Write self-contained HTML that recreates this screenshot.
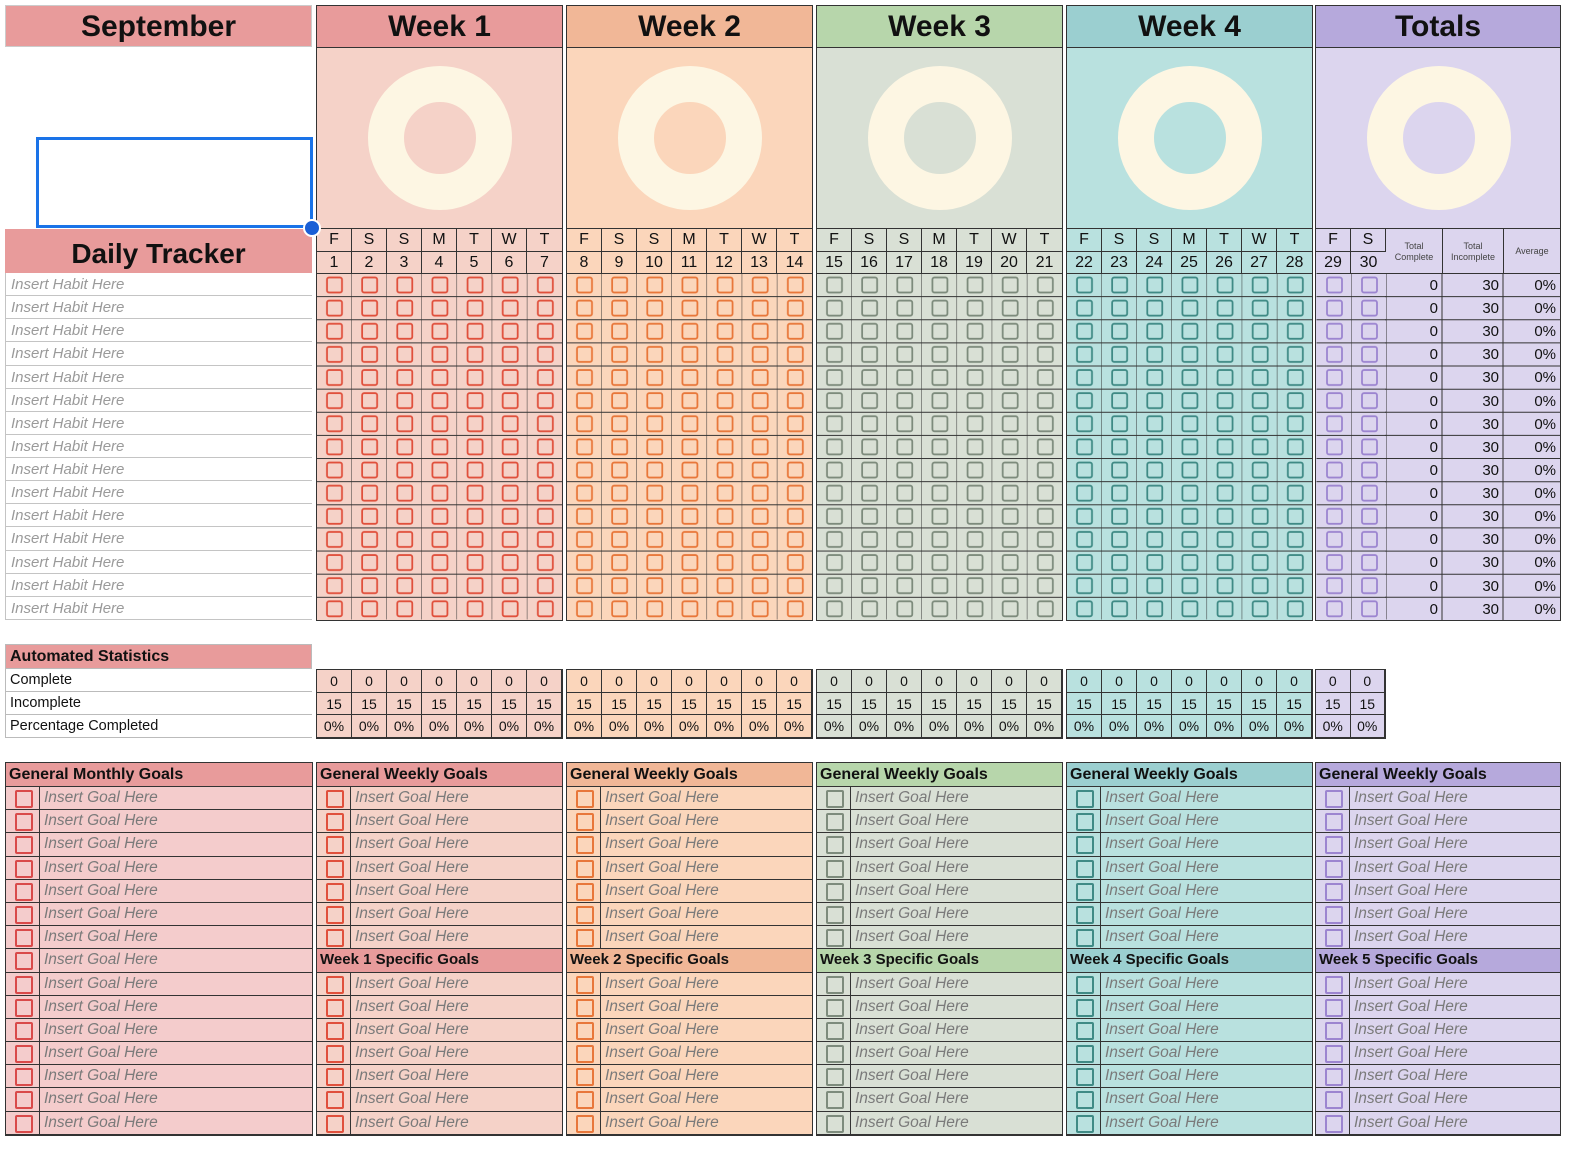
<!DOCTYPE html>
<html><head><meta charset="utf-8"><style>
*{box-sizing:border-box;margin:0;padding:0}
body{width:1588px;height:1151px;background:#fff;font-family:"Liberation Sans",sans-serif;position:relative;overflow:hidden;color:#111}
.a{position:absolute}
.hd{font-weight:bold;font-size:30px;text-align:center;line-height:42px;height:42px}
.wk{position:absolute;top:5px;width:247px;height:616px;border:1.5px solid #333}
.wk .hd{border-bottom:1.5px solid #333}
.dn{position:absolute;left:51px;top:60px;width:144px;height:144px;border-radius:50%;border:36px solid #fdf6e3}
.days{position:absolute;left:0;top:222px;width:100%;display:grid;grid-template-columns:repeat(7,1fr);font-size:16px;text-align:center}
.days span{height:22.5px;line-height:22px;border-top:1px solid #333;border-right:1px solid #333}
.days span:nth-child(7n){border-right:none}
.hab{position:absolute;left:5px;top:273px;width:307px}
.hab div{height:23.13px;line-height:23px;border-bottom:1px solid #c4c4c4;border-left:1px solid #c4c4c4;color:#9a9a9a;font-style:italic;font-size:15px;padding-left:5px}
.st{position:absolute;top:669px;height:70px;border:1.5px solid #333;display:grid;font-size:14px;text-align:center}
.st span{height:22.5px;line-height:22px;border-right:1px solid #333;border-bottom:1px solid #333}
.gc{position:absolute;top:762px;border:1.5px solid #333;width:247px}
.gc .gh{height:24px;line-height:24px;font-weight:bold;font-size:16px;padding-left:3px;border-bottom:1px solid #333}
.gc .r{height:23.2px;line-height:22px;border-bottom:1px solid #333;font-style:italic;color:#7a7a7a;font-size:15.5px;padding-left:38px;position:relative}
.gc .r:before{content:"";position:absolute;left:9px;top:3px;width:14px;height:14px;border:2px solid var(--c);border-radius:2px}
.gc .r:after{content:"";position:absolute;left:33px;top:0;bottom:0;border-left:1px solid #333}
.gc .s{height:23.2px;line-height:22px;border-bottom:1px solid #333;font-weight:bold;font-size:15px;padding-left:3px}
</style></head><body>

<div class="a hd" style="left:5px;top:5px;width:307px;background:#e89b9b;border:1px solid #ccc">September</div>
<div class="a" style="left:36px;top:137px;width:277px;height:91px;border:3px solid #1a73e8"></div>
<div class="a" style="left:303px;top:219px;width:18px;height:18px;border-radius:50%;background:#1a5fd6;border:2px solid #fff;z-index:5"></div>
<div class="a" style="left:5px;top:229px;width:307px;height:44px;background:#e89b9b;font-weight:bold;font-size:28px;text-align:center;line-height:50px">Daily Tracker</div>
<div class="hab">
<div>Insert Habit Here</div><div>Insert Habit Here</div><div>Insert Habit Here</div><div>Insert Habit Here</div><div>Insert Habit Here</div><div>Insert Habit Here</div><div>Insert Habit Here</div><div>Insert Habit Here</div><div>Insert Habit Here</div><div>Insert Habit Here</div><div>Insert Habit Here</div><div>Insert Habit Here</div><div>Insert Habit Here</div><div>Insert Habit Here</div><div>Insert Habit Here</div>
</div>

<div class="wk" style="left:316px;background:#f5d2c8"><div class="hd" style="background:#e89b9b">Week 1</div><div class="dn"></div>
<div class="days"><span>F</span><span>S</span><span>S</span><span>M</span><span>T</span><span>W</span><span>T</span><span>1</span><span>2</span><span>3</span><span>4</span><span>5</span><span>6</span><span>7</span></div></div>
<div class="wk" style="left:566px;background:#fbd6bb"><div class="hd" style="background:#f1b797">Week 2</div><div class="dn"></div>
<div class="days"><span>F</span><span>S</span><span>S</span><span>M</span><span>T</span><span>W</span><span>T</span><span>8</span><span>9</span><span>10</span><span>11</span><span>12</span><span>13</span><span>14</span></div></div>
<div class="wk" style="left:816px;background:#d9e0d5"><div class="hd" style="background:#b7d6ab">Week 3</div><div class="dn"></div>
<div class="days"><span>F</span><span>S</span><span>S</span><span>M</span><span>T</span><span>W</span><span>T</span><span>15</span><span>16</span><span>17</span><span>18</span><span>19</span><span>20</span><span>21</span></div></div>
<div class="wk" style="left:1066px;background:#b9e1df"><div class="hd" style="background:#9bcfd0">Week 4</div><div class="dn"></div>
<div class="days"><span>F</span><span>S</span><span>S</span><span>M</span><span>T</span><span>W</span><span>T</span><span>22</span><span>23</span><span>24</span><span>25</span><span>26</span><span>27</span><span>28</span></div></div>
<div class="wk" style="left:1315px;width:246px;background:#dcd5ee"><div class="hd" style="background:#b6a9dc">Totals</div><div class="dn"></div>
<div class="days" style="grid-template-columns:35px 35px 57px 61px 1fr"><span>F</span><span>S</span><span style="grid-row:span 2;font-size:9px;line-height:11px;padding-top:12px;height:45px;color:#444">Total<br>Complete</span><span style="grid-row:span 2;font-size:9px;line-height:11px;padding-top:12px;height:45px;color:#444">Total<br>Incomplete</span><span style="grid-row:span 2;font-size:9px;line-height:45px;height:45px;border-right:none;color:#444">Average</span><span>29</span><span>30</span></div></div>

<svg class="a" style="left:0;top:0" width="1588" height="1151">
<defs>
<pattern id="p1" x="316.5" y="273" width="35.14" height="23.13" patternUnits="userSpaceOnUse"><line x1="35.14" y1="0" x2="35.14" y2="23.13" stroke="#333"/><line x1="0" y1="0.5" x2="35.14" y2="0.5" stroke="#333"/><rect x="10.5" y="4.5" width="15" height="15" rx="2" fill="none" stroke="#e0503c" stroke-width="1.8"/></pattern>
<pattern id="p2" x="566.5" y="273" width="35.14" height="23.13" patternUnits="userSpaceOnUse"><line x1="35.14" y1="0" x2="35.14" y2="23.13" stroke="#333"/><line x1="0" y1="0.5" x2="35.14" y2="0.5" stroke="#333"/><rect x="10.5" y="4.5" width="15" height="15" rx="2" fill="none" stroke="#e8773a" stroke-width="1.8"/></pattern>
<pattern id="p3" x="816.5" y="273" width="35.14" height="23.13" patternUnits="userSpaceOnUse"><line x1="35.14" y1="0" x2="35.14" y2="23.13" stroke="#333"/><line x1="0" y1="0.5" x2="35.14" y2="0.5" stroke="#333"/><rect x="10.5" y="4.5" width="15" height="15" rx="2" fill="none" stroke="#7d8b7c" stroke-width="1.8"/></pattern>
<pattern id="p4" x="1066.5" y="273" width="35.14" height="23.13" patternUnits="userSpaceOnUse"><line x1="35.14" y1="0" x2="35.14" y2="23.13" stroke="#333"/><line x1="0" y1="0.5" x2="35.14" y2="0.5" stroke="#333"/><rect x="10.5" y="4.5" width="15" height="15" rx="2" fill="none" stroke="#3f8a85" stroke-width="1.8"/></pattern>
<pattern id="p5" x="1316.5" y="273" width="35" height="23.13" patternUnits="userSpaceOnUse"><line x1="35" y1="0" x2="35" y2="23.13" stroke="#333"/><line x1="0" y1="0.5" x2="35" y2="0.5" stroke="#333"/><rect x="10.5" y="4.5" width="15" height="15" rx="2" fill="none" stroke="#9c85d0" stroke-width="1.8"/></pattern>
</defs>
<rect x="316.5" y="273" width="245.5" height="346.5" fill="url(#p1)"/>
<rect x="566.5" y="273" width="245.5" height="346.5" fill="url(#p2)"/>
<rect x="816.5" y="273" width="245.5" height="346.5" fill="url(#p3)"/>
<rect x="1066.5" y="273" width="245.5" height="346.5" fill="url(#p4)"/>
<rect x="1316.5" y="273" width="70" height="346.5" fill="url(#p5)"/>
<g stroke="#333"><line x1="1385" y1="273.5" x2="1560" y2="273.5"/>
<line x1="1442" y1="273" x2="1442" y2="620"/><line x1="1503" y1="273" x2="1503" y2="620"/>
<line x1="1385" y1="296.6" x2="1560" y2="296.6"/><line x1="1385" y1="319.8" x2="1560" y2="319.8"/><line x1="1385" y1="342.9" x2="1560" y2="342.9"/><line x1="1385" y1="366" x2="1560" y2="366"/><line x1="1385" y1="389.2" x2="1560" y2="389.2"/><line x1="1385" y1="412.3" x2="1560" y2="412.3"/><line x1="1385" y1="435.4" x2="1560" y2="435.4"/><line x1="1385" y1="458.5" x2="1560" y2="458.5"/><line x1="1385" y1="481.7" x2="1560" y2="481.7"/><line x1="1385" y1="504.8" x2="1560" y2="504.8"/><line x1="1385" y1="527.9" x2="1560" y2="527.9"/><line x1="1385" y1="551.1" x2="1560" y2="551.1"/><line x1="1385" y1="574.2" x2="1560" y2="574.2"/><line x1="1385" y1="597.3" x2="1560" y2="597.3"/></g>
<g font-family="Liberation Sans" font-size="15" text-anchor="end" fill="#111">
<text x="1438" y="290">0</text><text x="1499" y="290">30</text><text x="1556" y="290">0%</text>
<text x="1438" y="313">0</text><text x="1499" y="313">30</text><text x="1556" y="313">0%</text>
<text x="1438" y="336">0</text><text x="1499" y="336">30</text><text x="1556" y="336">0%</text>
<text x="1438" y="359">0</text><text x="1499" y="359">30</text><text x="1556" y="359">0%</text>
<text x="1438" y="382">0</text><text x="1499" y="382">30</text><text x="1556" y="382">0%</text>
<text x="1438" y="406">0</text><text x="1499" y="406">30</text><text x="1556" y="406">0%</text>
<text x="1438" y="429">0</text><text x="1499" y="429">30</text><text x="1556" y="429">0%</text>
<text x="1438" y="452">0</text><text x="1499" y="452">30</text><text x="1556" y="452">0%</text>
<text x="1438" y="475">0</text><text x="1499" y="475">30</text><text x="1556" y="475">0%</text>
<text x="1438" y="498">0</text><text x="1499" y="498">30</text><text x="1556" y="498">0%</text>
<text x="1438" y="521">0</text><text x="1499" y="521">30</text><text x="1556" y="521">0%</text>
<text x="1438" y="544">0</text><text x="1499" y="544">30</text><text x="1556" y="544">0%</text>
<text x="1438" y="567">0</text><text x="1499" y="567">30</text><text x="1556" y="567">0%</text>
<text x="1438" y="591">0</text><text x="1499" y="591">30</text><text x="1556" y="591">0%</text>
<text x="1438" y="614">0</text><text x="1499" y="614">30</text><text x="1556" y="614">0%</text>
</g>
</svg>

<div class="a" style="left:5px;top:644px;width:307px;height:25px;background:#e89b9b;border:1px solid #bbb;font-weight:bold;font-size:16px;line-height:24px;padding-left:4px">Automated Statistics</div>
<div class="a" style="left:5px;top:669px;width:307px;font-size:14.5px;border-left:1px solid #bbb">
<div style="height:23px;line-height:22px;border-bottom:1px solid #bbb;padding-left:4px">Complete</div>
<div style="height:23px;line-height:22px;border-bottom:1px solid #bbb;padding-left:4px">Incomplete</div>
<div style="height:23px;line-height:22px;border-bottom:1px solid #bbb;padding-left:4px">Percentage Completed</div></div>

<div class="st" style="left:316px;width:247px;background:#f5d2c8;grid-template-columns:repeat(7,1fr)"><span>0</span><span>0</span><span>0</span><span>0</span><span>0</span><span>0</span><span>0</span><span>15</span><span>15</span><span>15</span><span>15</span><span>15</span><span>15</span><span>15</span><span>0%</span><span>0%</span><span>0%</span><span>0%</span><span>0%</span><span>0%</span><span>0%</span></div>
<div class="st" style="left:566px;width:247px;background:#fbd6bb;grid-template-columns:repeat(7,1fr)"><span>0</span><span>0</span><span>0</span><span>0</span><span>0</span><span>0</span><span>0</span><span>15</span><span>15</span><span>15</span><span>15</span><span>15</span><span>15</span><span>15</span><span>0%</span><span>0%</span><span>0%</span><span>0%</span><span>0%</span><span>0%</span><span>0%</span></div>
<div class="st" style="left:816px;width:247px;background:#d9e0d5;grid-template-columns:repeat(7,1fr)"><span>0</span><span>0</span><span>0</span><span>0</span><span>0</span><span>0</span><span>0</span><span>15</span><span>15</span><span>15</span><span>15</span><span>15</span><span>15</span><span>15</span><span>0%</span><span>0%</span><span>0%</span><span>0%</span><span>0%</span><span>0%</span><span>0%</span></div>
<div class="st" style="left:1066px;width:247px;background:#b9e1df;grid-template-columns:repeat(7,1fr)"><span>0</span><span>0</span><span>0</span><span>0</span><span>0</span><span>0</span><span>0</span><span>15</span><span>15</span><span>15</span><span>15</span><span>15</span><span>15</span><span>15</span><span>0%</span><span>0%</span><span>0%</span><span>0%</span><span>0%</span><span>0%</span><span>0%</span></div>
<div class="st" style="left:1315px;width:71px;background:#dcd5ee;grid-template-columns:repeat(2,1fr)"><span>0</span><span>0</span><span>15</span><span>15</span><span>0%</span><span>0%</span></div>

<div class="gc" style="left:5px;width:308px;background:#f4cccc;--c:#d94a4a"><div class="gh" style="background:#e89b9b">General Monthly Goals</div>
<div class="r">Insert Goal Here</div><div class="r">Insert Goal Here</div><div class="r">Insert Goal Here</div><div class="r">Insert Goal Here</div><div class="r">Insert Goal Here</div><div class="r">Insert Goal Here</div><div class="r">Insert Goal Here</div><div class="r">Insert Goal Here</div><div class="r">Insert Goal Here</div><div class="r">Insert Goal Here</div><div class="r">Insert Goal Here</div><div class="r">Insert Goal Here</div><div class="r">Insert Goal Here</div><div class="r">Insert Goal Here</div><div class="r">Insert Goal Here</div></div>

<div class="gc" style="left:316px;background:#f5d2c8;--c:#e0503c"><div class="gh" style="background:#e89b9b">General Weekly Goals</div>
<div class="r">Insert Goal Here</div><div class="r">Insert Goal Here</div><div class="r">Insert Goal Here</div><div class="r">Insert Goal Here</div><div class="r">Insert Goal Here</div><div class="r">Insert Goal Here</div><div class="r">Insert Goal Here</div><div class="s" style="background:#e89b9b">Week 1 Specific Goals</div><div class="r">Insert Goal Here</div><div class="r">Insert Goal Here</div><div class="r">Insert Goal Here</div><div class="r">Insert Goal Here</div><div class="r">Insert Goal Here</div><div class="r">Insert Goal Here</div><div class="r">Insert Goal Here</div></div>

<div class="gc" style="left:566px;background:#fbd6bb;--c:#e8773a"><div class="gh" style="background:#f1b797">General Weekly Goals</div>
<div class="r">Insert Goal Here</div><div class="r">Insert Goal Here</div><div class="r">Insert Goal Here</div><div class="r">Insert Goal Here</div><div class="r">Insert Goal Here</div><div class="r">Insert Goal Here</div><div class="r">Insert Goal Here</div><div class="s" style="background:#f1b797">Week 2 Specific Goals</div><div class="r">Insert Goal Here</div><div class="r">Insert Goal Here</div><div class="r">Insert Goal Here</div><div class="r">Insert Goal Here</div><div class="r">Insert Goal Here</div><div class="r">Insert Goal Here</div><div class="r">Insert Goal Here</div></div>

<div class="gc" style="left:816px;background:#d9e0d5;--c:#7d8b7c"><div class="gh" style="background:#b7d6ab">General Weekly Goals</div>
<div class="r">Insert Goal Here</div><div class="r">Insert Goal Here</div><div class="r">Insert Goal Here</div><div class="r">Insert Goal Here</div><div class="r">Insert Goal Here</div><div class="r">Insert Goal Here</div><div class="r">Insert Goal Here</div><div class="s" style="background:#b7d6ab">Week 3 Specific Goals</div><div class="r">Insert Goal Here</div><div class="r">Insert Goal Here</div><div class="r">Insert Goal Here</div><div class="r">Insert Goal Here</div><div class="r">Insert Goal Here</div><div class="r">Insert Goal Here</div><div class="r">Insert Goal Here</div></div>

<div class="gc" style="left:1066px;background:#b9e1df;--c:#3f8a85"><div class="gh" style="background:#9bcfd0">General Weekly Goals</div>
<div class="r">Insert Goal Here</div><div class="r">Insert Goal Here</div><div class="r">Insert Goal Here</div><div class="r">Insert Goal Here</div><div class="r">Insert Goal Here</div><div class="r">Insert Goal Here</div><div class="r">Insert Goal Here</div><div class="s" style="background:#9bcfd0">Week 4 Specific Goals</div><div class="r">Insert Goal Here</div><div class="r">Insert Goal Here</div><div class="r">Insert Goal Here</div><div class="r">Insert Goal Here</div><div class="r">Insert Goal Here</div><div class="r">Insert Goal Here</div><div class="r">Insert Goal Here</div></div>

<div class="gc" style="left:1315px;width:246px;background:#dcd5ee;--c:#9c85d0"><div class="gh" style="background:#b6a9dc">General Weekly Goals</div>
<div class="r">Insert Goal Here</div><div class="r">Insert Goal Here</div><div class="r">Insert Goal Here</div><div class="r">Insert Goal Here</div><div class="r">Insert Goal Here</div><div class="r">Insert Goal Here</div><div class="r">Insert Goal Here</div><div class="s" style="background:#b6a9dc">Week 5 Specific Goals</div><div class="r">Insert Goal Here</div><div class="r">Insert Goal Here</div><div class="r">Insert Goal Here</div><div class="r">Insert Goal Here</div><div class="r">Insert Goal Here</div><div class="r">Insert Goal Here</div><div class="r">Insert Goal Here</div></div>

</body></html>
